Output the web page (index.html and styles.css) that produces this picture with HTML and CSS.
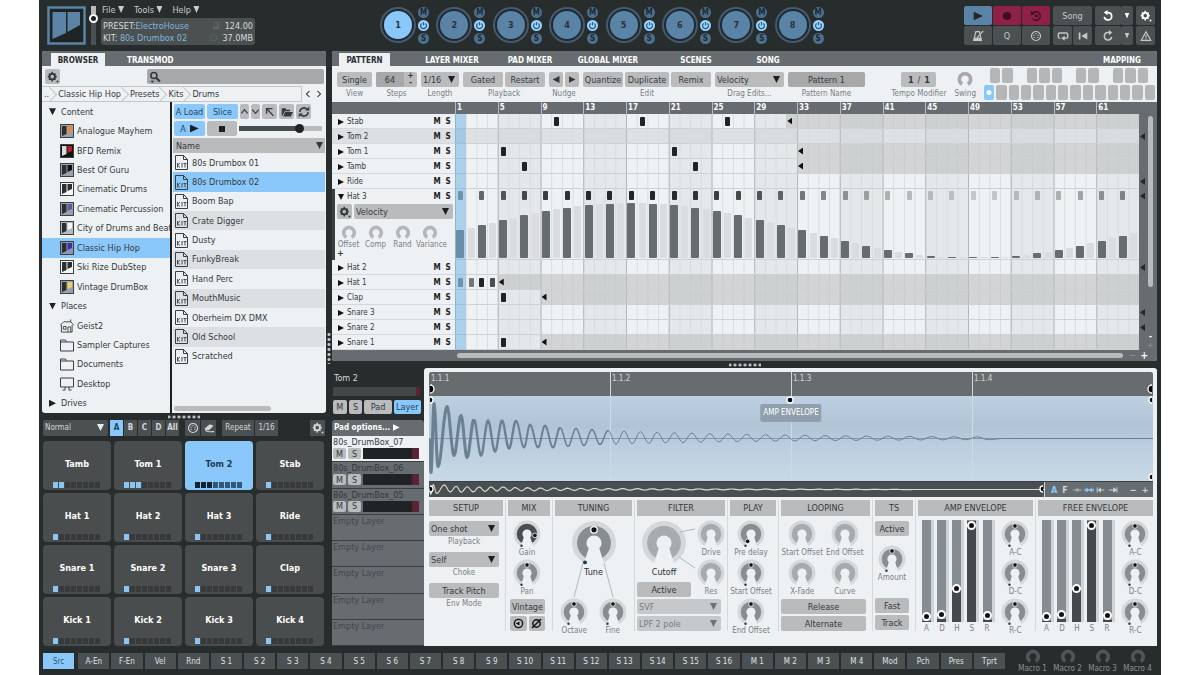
FILE: index.html
```html
<!DOCTYPE html>
<html lang="en">
<head>
  <meta charset="UTF-8">
  <meta name="viewport" content="width=device-width, initial-scale=1.0">
  <title>Geist2</title>
  <link rel="stylesheet" href="styles.css">
</head>
<body>
  <!-- shared icons -->
  <svg class="defs" aria-hidden="true">
    <symbol id="gear" viewBox="0 0 16 16">
      <circle cx="7" cy="7.5" r="3.6" fill="none" stroke="currentColor" stroke-width="2.4"/>
      <path d="M7 1v3M7 11v3M1 7.5h2.5M10.5 7.5H13M2.5 3.5l2 1.6M11.5 3.5l-2 1.6M2.5 11.5l2-1.6M11.5 11.5l-2-1.6" stroke="currentColor" stroke-width="2.2"/>
      <circle cx="14" cy="14" r="1.3" fill="currentColor"/>
    </symbol>
    <symbol id="search" viewBox="0 0 16 16">
      <circle cx="6.5" cy="6" r="4" fill="none" stroke="currentColor" stroke-width="2.2"/>
      <path d="M9.5 9l5 5" stroke="currentColor" stroke-width="2.8"/><path d="M2 13h5l-2.500 3z" fill="currentColor"/>
    </symbol>
    <symbol id="power" viewBox="0 0 12 12">
      <path d="M4 3.8a3.2 3.2 0 1 0 4 0M6 2.2v3.4" fill="none" stroke="currentColor" stroke-width="1.3"/>
    </symbol>
    <symbol id="refresh" viewBox="0 0 16 16">
      <path d="M2.5 8a5.5 5.5 0 0 1 9.5-3.7M13.5 8A5.5 5.5 0 0 1 4 11.7" fill="none" stroke="currentColor" stroke-width="2"/>
      <path d="M9.5 6H15V1zM6.5 10H1v5z" fill="currentColor"/>
    </symbol>
    <symbol id="folder" viewBox="0 0 16 16">
      <path d="M1 13V3h5l1 2h5v2H5L2 13zM3 14l2.5-6H16l-3 6z" fill="currentColor"/>
    </symbol>
    <symbol id="kit" viewBox="0 0 13 15">
      <path d="M.5.5h8l4 4v10H.5zM8.5.5v4h4" fill="none" stroke="#3a3f42"/>
      <path d="M2.5 8v4.500M5 8l-2.500 2.300L5 12.500M7 8v4.500M8.500 8.500h3M10 8.500v4" fill="none" stroke="#3a3f42" stroke-width=".9"/>
    </symbol>
    <symbol id="dir" viewBox="0 0 14 13">
      <path d="M.5 12.5v-11h5l1 2h7v9zM.5 3.5h6" fill="none" stroke="#3a3f42"/>
    </symbol>
    <symbol id="home" viewBox="0 0 15 14">
      <path d="M1.5 6v7.5H13V6M0 6.500l4-4h7.500l3.500 4M8.500 13.500V8h3v5.500M3.500 7.500h3v3h-3zM11.500 2.500V0" fill="none" stroke="#3a3f42"/>
    </symbol>
    <symbol id="screen" viewBox="0 0 14 13">
      <path d="M.5.5h13v9H.5zM5 9.5v2.5M9 9.5v2.5M2.5 12.5h3M8.5 12.5h3" fill="none" stroke="#3a3f42"/>
    </symbol>
    <symbol id="ball" viewBox="0 0 14 14">
      <circle cx="7" cy="7" r="5.3" fill="none" stroke="currentColor" stroke-width="1.3"/>
      <circle cx="4.5" cy="6" r=".8" fill="currentColor"/><circle cx="7" cy="4.3" r=".8" fill="currentColor"/><circle cx="9.5" cy="6" r=".8" fill="currentColor"/><circle cx="5" cy="8.7" r=".7" fill="currentColor"/><circle cx="9" cy="8.7" r=".7" fill="currentColor"/>
    </symbol>
    <symbol id="metro" viewBox="0 0 14 14">
      <path d="M4.5 2h4L11 12H2zM6 9l7-8" fill="none" stroke="currentColor" stroke-width="1.4"/>
      <path d="M2.5 9h8v3h-8z" fill="currentColor"/>
    </symbol>
    <symbol id="knob" viewBox="-14 -14 28 28">
      <circle r="13.4" class="k-rim"/><circle r="10.3" class="k-ring"/><circle r="4.6" class="k-gap"/>
      <path d="M-2.5 1L-7 15H7L2.5 1z" class="k-gap"/>
    </symbol>
    <symbol id="ring" viewBox="-9 -9 18 18">
      <path d="M-3 6A6 6 0 1 1 3 6" fill="none" stroke="currentColor" stroke-width="4"/>
    </symbol>
  </svg>

  <div class="app">
    <header class="top">
      <div class="brand">
        <svg class="logo" viewBox="0 0 39 39" aria-label="Geist2"><rect x="1.5" y="1.5" width="36" height="36" fill="#1f2425" stroke="#5a83a6" stroke-width="2.5"/><path d="M5.5 6H19v21L5.5 33z M20.500 6H33v13l-12.500 7z" fill="#5a83a6"/></svg>
        <input class="master" type="range" value="75" aria-label="Master volume">
        <div class="brand-info">
          <nav class="menu">
            <button>File <i class="down"></i></button>
            <button>Tools <i class="down"></i></button>
            <button>Help <i class="down"></i></button>
          </nav>
          <div class="lcd">
            <div><span>PRESET:<b>ElectroHouse</b></span><svg><use href="#metro"/></svg><span>124.00</span></div>
            <div><span>KIT: <b>80s Drumbox 02</b></span><svg><use href="#ball"/></svg><span>37.0MB</span></div>
          </div>
        </div>
      </div>
      <div class="engines" id="engines"></div>
      <div class="transport">
        <div class="t-grid">
          <button class="steel" aria-label="Play"><svg viewBox="0 0 14 14"><path d="M2 2l11 5-11 5z" fill="#20282c"/></svg></button>
          <button class="red" aria-label="Record"><svg viewBox="0 0 14 14"><circle cx="7" cy="7" r="4.8" fill="#3d1020"/></svg></button>
          <button class="red" aria-label="Overdub"><svg viewBox="0 0 14 14"><path d="M3 4a5 5 0 1 1 0 6" fill="none" stroke="#3d1020" stroke-width="1.6"/><path d="M1 6V1l5 4z" fill="#3d1020"/><circle cx="7.5" cy="7" r="1.8" fill="#3d1020"/></svg></button>
          <button aria-label="Metronome"><svg><use href="#metro"/></svg></button>
          <button>Q</button>
          <button aria-label="Midi"><svg><use href="#ball"/></svg></button>
        </div>
        <div class="t-grid song">
          <button class="wide">Song</button>
          <button aria-label="Loop"><svg viewBox="0 0 14 14"><path d="M4 9.500H3a1.500 1.500 0 0 1-1.500-1.500V5A1.500 1.500 0 0 1 3 3.500h8A1.500 1.500 0 0 1 12.500 5v3A1.500 1.500 0 0 1 11 9.500H8" fill="none" stroke="currentColor" stroke-width="1.6"/><path d="M9 6.500v6l-4-3z" fill="currentColor"/></svg></button>
          <button aria-label="Rewind"><svg viewBox="0 0 14 14"><path d="M2 3h2v8H2zM12 3v8L5 7z" fill="currentColor"/></svg></button>
        </div>
        <div class="t-grid undo">
          <button class="lit" aria-label="Undo"><svg viewBox="0 0 14 14"><path d="M5 3h2a4.3 4.3 0 1 1-4.3 5" fill="none" stroke="currentColor" stroke-width="2"/><path d="M6.5 0v6L2 3z" fill="currentColor"/></svg></button>
          <button class="lit" aria-label="Undo list"><i class="down"></i></button>
          <button aria-label="Redo"><svg viewBox="0 0 14 14"><path d="M9 3H7a4.3 4.3 0 1 0 4.3 5" fill="none" stroke="currentColor" stroke-width="1.8"/><path d="M8 0v6l4-3z" fill="currentColor"/></svg></button>
          <button aria-label="Redo list"><i class="down"></i></button>
        </div>
        <div class="t-grid side">
          <button class="lit" aria-label="Settings"><svg><use href="#gear"/></svg></button>
          <button aria-label="Panic"><svg viewBox="0 0 14 14"><path d="M7 2l5.5 10h-11zM7 5.5V9M7 9.8v1.2" fill="none" stroke="currentColor" stroke-width="1.4"/></svg></button>
        </div>
      </div>
    </header>

    <main class="main">
      <div class="column">
        <section class="panel browser">
          <div class="tabs browser-tabs">
            <button class="tab active">BROWSER</button>
            <button class="tab">TRANSMOD</button>
          </div>
          <div class="search-row">
            <button class="btn icon" aria-label="Browser options"><svg><use href="#gear"/></svg></button>
            <label class="search"><svg><use href="#search"/></svg><input type="text" aria-label="Search"></label>
          </div>
          <nav class="crumbs">
            <div class="crumb-list"><a href="#">..</a><a href="#">Classic Hip Hop</a><a href="#">Presets</a><a href="#">Kits</a><a href="#">Drums</a></div>
            <button aria-label="Back"><svg viewBox="0 0 8 10"><path d="M6 1L2 5l4 4" fill="none" stroke="#222" stroke-width="1.4"/></svg></button>
            <button aria-label="Forward"><svg viewBox="0 0 8 10"><path d="M2 1l4 4-4 4" fill="none" stroke="#222" stroke-width="1.4"/></svg></button>
          </nav>
          <div class="browser-body">
            <ul class="tree" id="tree"></ul>
            <div class="files">
              <div class="file-tools">
                <button class="btn blue">A Load</button>
                <button class="btn blue">Slice</button>
                <button class="btn thin" aria-label="Previous"><svg viewBox="0 0 10 10"><path d="M1.5 7L5 3l3.5 4" fill="none" stroke="currentColor" stroke-width="1.3"/></svg></button>
                <button class="btn thin" aria-label="Next"><svg viewBox="0 0 10 10"><path d="M1.5 3L5 7l3.5-4" fill="none" stroke="currentColor" stroke-width="1.3"/></svg></button>
                <button class="btn icon" aria-label="Reveal"><svg viewBox="0 0 14 14"><path d="M3 9V3h7M3.500 3.500l7.500 8" fill="none" stroke="currentColor" stroke-width="1.5"/></svg></button>
                <button class="btn icon" aria-label="Open folder"><svg><use href="#folder"/></svg></button>
                <button class="btn icon" aria-label="Refresh"><svg><use href="#refresh"/></svg></button>
              </div>
              <div class="file-tools">
                <button class="btn blue">A <i class="right big"></i></button>
                <button class="btn stop" aria-label="Stop"><i></i></button>
                <input class="preview" type="range" value="75" aria-label="Preview volume">
              </div>
              <div class="file-head">Name <i class="down"></i></div>
              <ul class="file-list" id="files"></ul>
              <div class="hbar"></div>
            </div>
          </div>
        </section>

        <div class="dots"></div>

        <div class="pad-tools">
          <span class="drop dark mode"><select aria-label="Pad mode"><option>Normal</option></select></span>
          <div class="banks">
            <button class="on">A</button><button>B</button><button>C</button><button>D</button><button>All</button>
          </div>
          <div class="banks tools">
            <button aria-label="Midi learn"><svg><use href="#ball"/></svg></button>
            <button aria-label="Erase"><svg viewBox="0 0 16 14"><path d="M2 8l7-6 5 2-6 6H4z" fill="currentColor"/><path d="M3 10c3 4 8 1 12 2" fill="none" stroke="currentColor" stroke-width="1.4"/></svg></button>
          </div>
          <div class="banks repeat"><button>Repeat</button><button>1/16</button></div>
          <button class="pad-gear" aria-label="Pad settings"><svg><use href="#gear"/></svg></button>
        </div>

        <div class="pads" id="pads"></div>
      </div>

      <div class="column">
        <section class="panel sequencer">
          <div class="tabs seq-tabs">
            <button class="tab active">PATTERN</button>
            <button class="tab layer-mixer">LAYER MIXER</button>
            <button class="tab">PAD MIXER</button>
            <button class="tab">GLOBAL MIXER</button>
            <button class="tab scenes">SCENES</button>
            <button class="tab song-tab">SONG</button>
            <button class="tab mapping">MAPPING</button>
          </div>
          <div class="toolbar">
            <div class="group"><div><button class="btn w35">Single</button></div><span>View</span></div>
            <div class="group"><div class="stepper"><input type="text" value="64" id="steps"><span class="pm"><button>+</button><button>-</button></span></div><label for="steps">Steps</label></div>
            <div class="group"><span class="drop w38"><select id="length"><option>1/16</option></select></span><label for="length">Length</label></div>
            <div class="group"><div><button class="btn w40">Gated</button><button class="btn w40">Restart</button></div><span>Playback</span></div>
            <div class="group"><div><button class="btn w14" aria-label="Nudge left"><i class="back"></i></button><button class="btn w14" aria-label="Nudge right"><i class="right"></i></button></div><span>Nudge</span></div>
            <div class="group"><div><button class="btn w40">Quantize</button><button class="btn w44">Duplicate</button><button class="btn w40">Remix</button></div><span>Edit</span></div>
            <div class="group"><span class="drop w69"><select id="drag"><option>Velocity</option></select></span><label for="drag">Drag Edits...</label></div>
            <div class="group"><input class="name" type="text" value="Pattern 1" id="pattern-name"><label for="pattern-name">Pattern Name</label></div>
            <div class="toolbar-end">
              <div class="group"><div class="btn tempo"><b>1</b> / <b>1</b></div><span>Tempo Modifier</span></div>
              <div class="group swing"><svg><use href="#ring"/></svg><span>Swing</span></div>
              <div class="keys" id="keys"></div>
            </div>
          </div>
          <div class="ruler"><div class="ruler-marks" id="ruler"></div></div>
          <div class="tracks">
            <div class="track-rows" id="rows-a"></div>
            <div class="lane">
              <div class="lane-side">
                <div class="lane-pick">
                  <button class="btn icon" aria-label="Lane options"><svg><use href="#gear"/></svg></button>
                  <span class="drop"><select aria-label="Lane"><option>Velocity</option></select></span>
                </div>
                <div class="lane-knobs">
                  <div><svg><use href="#ring"/></svg>Offset</div>
                  <div><svg><use href="#ring"/></svg>Comp</div>
                  <div><svg><use href="#ring"/></svg>Rand</div>
                  <div><svg><use href="#ring"/></svg>Variance</div>
                </div>
                <button class="plus">+</button>
              </div>
              <div class="steps bars" id="velocity"></div>
              <div class="gutter"></div>
            </div>
            <div class="track-rows" id="rows-b"></div>
            <div class="playhead"><i></i></div>
            <div class="vbar"></div>
            <div class="vzoom"><b>-</b><i>+</i></div>
          </div>
          <div class="seq-foot"><div class="hbar"></div><i>−</i><b>+</b></div>
        </section>

        <div class="dots"></div>

        <div class="lower">
          <aside class="layers">
            <h2>Tom 2</h2>
            <div class="meter"></div>
            <div class="layer-btns">
              <button class="btn">M</button><button class="btn">S</button><button class="btn pad-btn">Pad</button><button class="btn blue pad-btn">Layer</button>
            </div>
            <button class="pad-options">Pad options... <i class="right"></i></button>
            <div class="layer-list" id="layers"></div>
          </aside>

          <section class="editor">
            <div class="wave">
              <div class="wave-ruler"><span>1.1.1</span><span>1.1.2</span><span>1.1.3</span><span>1.1.4</span></div>
              <div class="wave-view">
                <svg viewBox="0 0 724 85" preserveAspectRatio="none" id="wave"></svg>
                <span class="tip">AMP ENVELOPE</span>
              </div>
              <div class="wave-foot">
                <svg viewBox="0 0 724 15" preserveAspectRatio="none" id="overview"></svg>
                <div class="wave-zoom">
                  <b class="a">A</b><b>F</b>
                  <svg viewBox="0 0 58 10"><path d="M0 5h3M7 5h3M5 3v4M48 5" stroke="#aeb4b6"/><path d="M3 3l2 2-2 2zM7 3L5 5l2 2z" fill="#aeb4b6"/><path d="M13 5h10" stroke="#8bc8fb"/><path d="M15 2l3 3-3 3zM21 2l-3 3 3 3zM13 3l2 2-2 2zM23 3l-2 2 2 2z" fill="#8bc8fb"/><path d="M27 2v6M28 5h7M40 5h7M49 2v6" stroke="#d4d8da"/><path d="M31 2v6l-3-3zM45 2v6l4-3z" fill="#d4d8da"/></svg>
                  <b>−</b><b>+</b>
                </div>
              </div>
              <svg class="handles" viewBox="0 0 724 125" preserveAspectRatio="none">
                <g fill="#000" stroke="#fff" stroke-width="1.3">
                  <path d="M1 13a4 4 0 0 1 0 8M1 25a3 3 0 0 1 0 6M1 114a3 3 0 0 1 0 6"/>
                  <circle cx="361" cy="28" r="3"/>
                  <path d="M723 13a4 4 0 0 0 0 8M723 25a3 3 0 0 0 0 6M723 102a3 3 0 0 0 0 6M614 114a3 3 0 0 0 0 6"/>
                </g>
              </svg>
            </div>

            <div class="sections">
              <div class="sec">
                <h3>SETUP</h3>
                <div class="setup">
                  <span class="drop"><select id="playback"><option>One shot</option></select></span><label for="playback">Playback</label>
                  <span class="drop"><select id="choke"><option>Self</option></select></span><label for="choke">Choke</label>
                  <button class="btn" id="env">Track Pitch</button><label for="env">Env Mode</label>
                </div>
              </div>
              <div class="sec">
                <h3>MIX</h3>
                <div class="cells">
                  <div class="k dark" data-dot="100">Gain</div>
                  <div class="k" data-dot="0">Pan</div>
                  <div class="pair"><button class="btn">Vintage</button>
                    <span class="half"><button class="btn" aria-label="Mono"><svg viewBox="0 0 12 12"><circle cx="6" cy="6" r="4.5" fill="none" stroke="#111" stroke-width="1.5"/><path d="M3 6l4-2v4z"/></svg></button><button class="btn" aria-label="Phase"><svg viewBox="0 0 12 12"><circle cx="6" cy="6" r="4" fill="none" stroke="#111" stroke-width="1.6"/><path d="M1 11L11 1" stroke="#111" stroke-width="1.5"/></svg></button></span>
                  </div>
                </div>
              </div>
              <div class="sec">
                <h3>TUNING</h3>
                <div class="cells two tuning">
                  <svg class="wires" viewBox="0 0 77 117" preserveAspectRatio="none"><path d="M28 43l-9 34M49 43l9 34" stroke="#b4b8ba" fill="none"/></svg>
                  <div class="k large" data-dot="0">Tune</div>
                  <div class="k" data-dot="0">Octave</div>
                  <div class="k" data-dot="0">Fine</div>
                </div>
              </div>
              <div class="sec">
                <h3>FILTER</h3>
                <div class="cells filter">
                  <svg class="wires" viewBox="0 0 88 117" preserveAspectRatio="none"><path d="M43 12l15-3M42 37l16 11" stroke="#b4b8ba" fill="none"/></svg>
                  <div class="k large dim">Cutoff</div>
                  <div class="k dim">Drive</div>
                  <div class="k dim">Res</div>
                  <button class="btn active-btn">Active</button>
                  <div class="pair wide">
                    <span class="drop off"><select aria-label="Filter type"><option>SVF</option></select></span>
                    <span class="drop off"><select aria-label="Filter mode"><option>LPF 2 pole</option></select></span>
                  </div>
                </div>
              </div>
              <div class="sec">
                <h3>PLAY</h3>
                <div class="cells">
                  <div class="k" data-dot="-155">Pre delay</div>
                  <div class="k" data-dot="0">Start Offset</div>
                  <div class="k" data-dot="0">End Offset</div>
                </div>
              </div>
              <div class="sec">
                <h3>LOOPING</h3>
                <div class="cells two">
                  <div class="k dim">Start Offset</div>
                  <div class="k dim">End Offset</div>
                  <div class="k dim">X-Fade</div>
                  <div class="k dim">Curve</div>
                  <div class="pair wide"><button class="btn">Release</button><button class="btn">Alternate</button></div>
                </div>
              </div>
              <div class="sec">
                <h3>TS</h3>
                <div class="ts">
                  <button class="btn">Active</button>
                  <div class="k" data-dot="0">Amount</div>
                  <div class="pair"><button class="btn">Fast</button><button class="btn">Track</button></div>
                </div>
              </div>
              <div class="sec"><h3>AMP ENVELOPE</h3><div class="env"></div></div>
              <div class="sec"><h3>FREE ENVELOPE</h3><div class="env"></div></div>
            </div>
          </section>
        </div>
      </div>
    </main>

    <footer class="mods">
      <div class="mod-list" id="mods"></div>
      <div class="macros">
        <div><svg><use href="#ring"/></svg>Macro 1</div>
        <div><svg><use href="#ring"/></svg>Macro 2</div>
        <div><svg><use href="#ring"/></svg>Macro 3</div>
        <div><svg><use href="#ring"/></svg>Macro 4</div>
      </div>
    </footer>
  </div>
  <script src="script.js"></script>
</body>
</html>
```
FILE: styles.css
```css
:root {
  --bg: #272c2d;
  --panel: #edf1f3;
  --bar: #666c6f;
  --btn: #b9bbbd;
  --dark-btn: #4b5152;
  --blue: #8ac8fc;
  --steel: #5a83a6;
  --text: #34393c;
  --muted: #7b8083;
}
* {
  box-sizing: border-box;
}
body {
  margin: 0;
  padding: 0 39px;
  background: #fff;
  color: var(--text);
  font: 9px/12px "DejaVu Sans Condensed", "DejaVu Sans", sans-serif;
}
button, input, select {
  font: inherit;
  color: inherit;
  margin: 0;
  padding: 0;
  border: 0;
  background: none;
  min-width: 0;
  white-space: nowrap;
}
ul {
  list-style: none;
  margin: 0;
  padding: 0;
}
h2, h3 {
  margin: 0;
  font: inherit;
}
svg {
  display: block;
}
.defs {
  display: none;
}
.app {
  min-height: 100vh;
  display: flex;
  flex-direction: column;
  background: var(--bg);
  padding: 0 4px 0 3px;
}

/* triangles */
.down, .right, .back {
  display: inline-block;
  width: 7px;
  height: 7px;
  background: currentColor;
}
.down { clip-path: polygon(0 0, 100% 0, 50% 100%); }
.right { clip-path: polygon(0 0, 100% 50%, 0 100%); }
.back { clip-path: polygon(100% 0, 100% 100%, 0 50%); }
.big {
  width: 9px;
  height: 8px;
}

/* buttons and drop-downs */
.btn {
  height: 15px;
  border-radius: 2px;
  background: var(--btn);
  text-align: center;
  display: flex;
  align-items: center;
  justify-content: center;
}
.btn.blue {
  background: var(--blue);
  color: #24445e;
}
.btn.icon {
  width: 15px;
}
.btn.icon svg {
  width: 12px;
  height: 12px;
}
.w14 { width: 14px; }
.w35 { width: 35px; }
.w38 { width: 38px; }
.w40 { width: 40px; }
.w44 { width: 44px; }
.w69 { width: 69px; }
.drop {
  position: relative;
  display: block;
  height: 15px;
  border-radius: 2px;
  background: var(--btn);
}
.drop select {
  appearance: none;
  width: 100%;
  height: 15px;
  padding-left: 2px;
}
.drop::after {
  content: "";
  position: absolute;
  right: 4px;
  top: 4px;
  width: 7px;
  height: 7px;
  background: #1c2022;
  clip-path: polygon(0 0, 100% 0, 50% 100%);
  pointer-events: none;
}
.drop.off {
  background: #c6c9cb;
  color: #777b7e;
}
.drop.off::after {
  background: #6d7174;
}

/* header */
.top {
  height: 51px;
  display: flex;
  padding: 6px 2px 0 5px;
}
.brand {
  width: 333px;
  display: flex;
}
.logo {
  width: 39px;
  height: 39px;
}
.master {
  appearance: none;
  writing-mode: vertical-lr;
  direction: rtl;
  width: 5px;
  height: 39px;
  margin: 0 5px;
  background: linear-gradient(#b9bbbd 8px, #4b5152 8px);
}
.master::-webkit-slider-thumb {
  appearance: none;
  width: 9px;
  height: 9px;
  margin: 0 -2px;
  border: 2px solid #fff;
  border-radius: 50%;
  background: #1c2022;
}
.menu {
  display: flex;
  gap: 10px;
  height: 12px;
  margin-top: -2px;
  padding-left: 1px;
  color: #c9cdcf;
}
.menu .down {
  width: 6px;
}
.lcd {
  width: 154px;
  height: 27px;
  margin-top: 2px;
  padding: 2px;
  border-radius: 3px;
  background: #4b5051;
  color: #d8dcdd;
}
.lcd div {
  display: flex;
  justify-content: space-between;
}
.lcd b {
  font-weight: normal;
  color: #84b5dc;
}
.lcd svg {
  width: 9px;
  height: 9px;
  margin: 1px 4px 0 auto;
  color: #5f6566;
}
.engines {
  width: 451px;
  display: flex;
}
.engine {
  flex: 1;
  display: flex;
  gap: 2px;
}
.engine > button {
  width: 32px;
  height: 32px;
  margin: 3px 2px;
  border: 2px solid #1d2a34;
  border-radius: 50%;
  background: var(--steel);
  box-shadow: 0 0 0 2px #47596a;
  color: #25333e;
  font-weight: bold;
}
.engine > button.on {
  background: var(--blue);
}
.engine > div {
  display: flex;
  flex-direction: column;
  gap: 2px;
  padding-top: 1px;
}
.engine div button {
  width: 11px;
  height: 11px;
  border-radius: 50%;
  background: #4d708d;
  color: #1d2a34;
  font-size: 8px;
  line-height: 11px;
  font-weight: bold;
}
.engine div .pw {
  background: #9bd3ff;
  color: #285d8a;
}
.transport {
  margin-left: auto;
  display: flex;
  gap: 3px;
}
.t-grid {
  display: grid;
  grid-template-columns: repeat(3, 28px);
  grid-auto-rows: 19px;
  gap: 1px;
}
.t-grid.song {
  grid-template-columns: 19px 19px;
}
.t-grid.undo {
  grid-template-columns: 26px 12px;
  gap: 1px 0;
}
.t-grid.side {
  grid-template-columns: 19px;
}
.t-grid button {
  display: flex;
  align-items: center;
  justify-content: center;
  background: var(--dark-btn);
  border-radius: 2px;
  color: #c4c8ca;
}
.t-grid .wide {
  grid-column: span 2;
}
.t-grid .steel { background: var(--steel); }
.t-grid .red { background: #8f2149; }
.t-grid .lit { color: #fff; }
.t-grid svg {
  width: 12px;
  height: 12px;
}
.t-grid .down {
  width: 5px;
  height: 6px;
}

/* main columns */
.main {
  flex: 1;
  display: grid;
  grid-template-columns: 284px minmax(0, 1fr);
  gap: 6px;
  position: relative;
}
.column {
  display: flex;
  flex-direction: column;
}
.main::after {
  content: "";
  position: absolute;
  left: 285px;
  bottom: 282px;
  width: 4px;
  height: 32px;
  background: radial-gradient(circle, #c4c8ca 1px, transparent 2px) 0 0 / 4px 5px;
}
.dots {
  height: 7px;
  flex: none;
  background: radial-gradient(circle, #c4c8ca 1px, transparent 2px) center / 5px 4px repeat-x;
  width: 32px;
  margin: 0 auto;
}
.panel {
  border-radius: 3px;
  background: var(--panel);
  overflow: hidden;
}
.tabs {
  height: 15px;
  padding: 2px 0 0 9px;
  display: flex;
  background: var(--bar);
}
.tab {
  font-size: 8px;
  font-weight: bold;
  color: #fff;
  height: 13px;
  padding-top: 2px;
}
.tab.active {
  background: var(--panel);
  color: #2b2f31;
  width: 54px;
}

/* browser */
.browser {
  flex: 1;
  display: flex;
  flex-direction: column;
}
.browser-tabs .tab + .tab {
  margin-left: 22px;
}
.search-row {
  display: flex;
  justify-content: space-between;
  padding: 3px 2px 2px 3px;
}
.search {
  width: 177px;
  height: 15px;
  border-radius: 2px;
  background: #a6a8aa;
  display: flex;
  align-items: center;
  padding-left: 2px;
}
.search svg {
  width: 12px;
  height: 12px;
}
.search input {
  flex: 1;
}
.crumbs {
  display: flex;
  height: 16px;
  align-items: center;
  padding-right: 2px;
}
.crumb-list {
  flex: 1;
  display: flex;
  align-items: center;
  height: 16px;
  border: 1px solid #c3c7c9;
  border-left: 0;
}
.crumb-list a {
  color: inherit;
  text-decoration: none;
  padding-left: 2px;
  display: flex;
  align-items: center;
}
.crumb-list a:not(:last-child)::after {
  content: "";
  width: 10px;
  height: 10px;
  margin: 0 1px 0 -5px;
  border: solid #c3c7c9;
  border-width: 1px 1px 0 0;
  transform: rotate(45deg);
}
.crumbs button {
  width: 11px;
}
.crumbs svg {
  width: 6px;
  height: 8px;
  margin: auto;
}
.browser-body {
  flex: 1;
  display: grid;
  grid-template-columns: 130px minmax(0, 1fr);
}
.tree {
  display: grid;
  grid-auto-rows: 1fr;
  border-right: 2px solid #1c2022;
  overflow: hidden;
}
.tree li {
  display: flex;
  align-items: center;
  gap: 3px;
  padding-left: 18px;
  white-space: nowrap;
}
.tree .head {
  padding-left: 7px;
  gap: 5px;
}
.tree .head i {
  color: #1c2022;
}
.tree svg {
  width: 14px;
  height: 14px;
  flex: none;
}
.tree .on, .file-list .on {
  background: var(--blue);
}
.files {
  padding: 2px 1px 2px 2px;
  display: flex;
  flex-direction: column;
}
.file-tools {
  display: flex;
  gap: 2px;
  margin-bottom: 2px;
}
.file-tools .blue {
  width: 31px;
  gap: 4px;
}
.file-tools .blue .right {
  color: #1c2022;
}
.file-tools .thin {
  width: 9px;
}
.file-tools .thin svg {
  width: 9px;
  height: 9px;
}
.stop {
  width: 30px;
}
.stop i {
  width: 6px;
  height: 6px;
  background: #1c2022;
}
.preview {
  appearance: none;
  flex: 1;
  height: 5px;
  margin: 5px 3px 0 0;
  background: linear-gradient(90deg, #484d50 75%, var(--btn) 75%);
}
.preview::-webkit-slider-thumb {
  appearance: none;
  width: 9px;
  height: 9px;
  border-radius: 50%;
  background: #202426;
}
.file-head {
  height: 15px;
  margin-left: -1px;
  padding: 0 2px 0 3px;
  display: flex;
  align-items: center;
  justify-content: space-between;
  background: var(--btn);
}
.file-list {
  height: 213px;
  margin-left: -1px;
  display: grid;
  grid-auto-rows: 1fr;
}
.file-list li {
  display: flex;
  align-items: center;
  gap: 4px;
  padding-left: 2px;
}
.file-list li:nth-child(even) {
  background: #dde0e3;
}
.file-list .on:nth-child(even) {
  background: var(--blue);
}
.file-list svg {
  width: 13px;
  height: 15px;
}
.hbar {
  height: 5px;
  border-radius: 3px;
  background: var(--btn);
}
.files .hbar {
  width: 97px;
  margin-top: auto;
}

/* pad tools */
.pad-tools {
  display: flex;
  height: 16px;
  margin-bottom: 5px;
  padding: 0 1px;
  color: #d3d7d8;
}
.pad-tools button, .drop.dark {
  background: var(--dark-btn);
  height: 16px;
}
.mode {
  width: 65px;
  font-size: 8px;
}
.mode select {
  background: none;
}
.drop.dark::after {
  background: #e8ebec;
}
.banks {
  display: flex;
  gap: 1px;
  margin-left: 2px;
}
.banks button {
  width: 13px;
  font-size: 8px;
  font-weight: bold;
}
.pad-tools .banks .on {
  background: var(--blue);
  color: #24445e;
}
.banks.tools {
  margin-left: 6px;
}
.banks.tools button {
  width: 15px;
}
.pad-tools svg {
  width: 12px;
  height: 12px;
  margin: auto;
}
.banks.repeat {
  margin-left: 6px;
}
.banks.repeat button {
  width: 23px;
  font-weight: normal;
}
.banks.repeat button:first-child {
  width: 32px;
}
.pad-gear {
  width: 15px;
  margin-left: auto;
}
.pads {
  display: grid;
  grid-template-columns: repeat(4, 1fr);
  grid-auto-rows: 49px;
  gap: 3px;
  padding: 0 2px 0 1px;
}
.pad {
  border-radius: 4px;
  background: #494d4e;
  color: #fff;
  font-weight: bold;
  display: flex;
  flex-direction: column;
  align-items: center;
  justify-content: flex-end;
  gap: 12px;
  padding-bottom: 2px;
}
.pad span {
  display: flex;
}
.pad i {
  width: 6px;
  height: 6px;
  background: #37393a;
  border-right: 1px solid #494d4e;
}
.pad i.lit {
  background: #8cc4f2;
}
.pad.on {
  background: var(--blue);
  color: #1f3a50;
}
.pad.on i {
  background: #31587a;
  border-color: #8ac8fc;
}
.pad.on i.lit {
  background: #142330;
}

/* sequencer */
.seq-tabs {
  padding-left: 7px;
}
.seq-tabs .tab {
  width: 78px;
}
.seq-tabs .tab.active {
  width: 51px;
}
.seq-tabs .layer-mixer {
  margin-left: 23px;
}
.seq-tabs .scenes {
  width: 98px;
}
.seq-tabs .song-tab {
  width: 46px;
}
.seq-tabs .mapping {
  margin-left: auto;
  width: 70px;
}
.toolbar {
  display: flex;
  gap: 4px;
  height: 36px;
  padding: 6px 2px 0 5px;
}
.group > div {
  display: flex;
  gap: 2px;
}
.group > span:last-child, .group > label {
  display: block;
  margin-top: 1px;
  font-size: 8px;
  text-align: center;
  color: var(--muted);
  white-space: nowrap;
}
.group .stepper {
  gap: 0;
  width: 41px;
  height: 15px;
  border-radius: 2px;
  background: var(--btn);
}
.stepper input {
  width: 28px;
  text-align: center;
  background: #a6a8aa;
  border-radius: 2px;
}
.pm {
  display: flex;
  flex-direction: column;
  width: 13px;
}
.pm button {
  height: 7px;
  line-height: 7px;
  font-weight: bold;
  font-size: 8px;
}
.name {
  display: block;
  width: 77px;
  height: 15px;
  border-radius: 2px;
  background: #a6a8aa;
  text-align: center;
}
.toolbar-end {
  margin-left: auto;
  display: flex;
  gap: 8px;
}
.group .tempo {
  width: 35px;
  margin: 0 auto;
  gap: 4px;
}
.swing svg {
  width: 18px;
  height: 17px;
  margin: -2px auto 0;
  color: #a6a8aa;
}
.keys {
  width: 171px;
  margin-top: -4px;
}
.keys div {
  display: grid;
  grid-template-columns: repeat(14, 1fr);
  gap: 2px;
}
.keys .black {
  padding: 0 7px 0 6px;
  grid-template-columns: repeat(13, 1fr);
  margin-bottom: 2px;
}
.keys button {
  height: 15px;
  border-radius: 2px;
  background: #b4b6b8;
}
.keys .on {
  background: radial-gradient(circle, #fff 2px, var(--blue) 3px);
}
.ruler {
  height: 12px;
  background: var(--bar);
  padding: 0 18px 0 123px;
}
.ruler-marks {
  display: grid;
  grid-template-columns: repeat(16, 1fr);
}
.ruler-marks span {
  height: 12px;
  padding-left: 1px;
  border-left: 1px solid #b9bbbd;
  color: #fff;
  font-size: 8px;
  font-weight: bold;
}
.tracks {
  position: relative;
  background: linear-gradient(270deg, var(--bar) 18px, var(--panel) 18px);
  padding-bottom: 2px;
}
.track-rows {
  height: 88px;
  display: grid;
  grid-auto-rows: 1fr;
}
.track, .lane {
  display: grid;
  grid-template-columns: 123px minmax(0, 1fr) 18px;
}
.track-name {
  display: flex;
  align-items: center;
  gap: 3px;
  padding: 2px 3px 0 6px;
  font-size: 8px;
  border-bottom: 1px solid #d5d9db;
}
.track-name .right, .track-name .down {
  width: 6px;
  height: 6px;
  color: #111;
}
.track-name span {
  flex: 1;
}
.track-name button {
  width: 8px;
  font-weight: bold;
  color: #1c2022;
}
.steps {
  --even: #eff2f4;
  --odd: #e4e8eb;
  display: grid;
  grid-template-columns: repeat(64, 1fr);
  align-items: center;
  justify-items: center;
  border-bottom: 1px solid #cdd2d5;
  background:
    linear-gradient(90deg, #b3b8bb 1px, transparent 1px) 0 0 / 6.25% 100%,
    linear-gradient(90deg, #d9dde0 1px, transparent 1px) 0 0 / 1.5625% 100%,
    linear-gradient(90deg, var(--even) 50%, var(--odd) 50%) 0 0 / 12.5% 100%;
}
.selected .track-name {
  background: #dce0e3;
}
.selected .steps {
  --even: #dde1e4;
  --odd: #d8dcdf;
}
.steps > * {
  grid-row: 1;
}
.steps .note {
  width: 5px;
  height: 9px;
  border-radius: 1px;
  background: #202426;
}
.steps .rest {
  width: 100%;
  height: 100%;
  background: rgba(190, 192, 192, .6);
}
.steps .back {
  width: 5px;
  height: 7px;
  justify-self: start;
  margin-left: 1px;
  color: #111;
}
.gutter {
  background: var(--bar);
  display: flex;
  align-items: center;
  padding-left: 1px;
}
.gutter .back {
  width: 5px;
  height: 7px;
  color: #25292b;
}
.lane {
  height: 58px;
}
.lane-side {
  border-left: 3px solid #3a3f42;
  padding: 2px 2px 0 2px;
}
.track.open .track-name {
  border-left: 3px solid #3a3f42;
  padding-left: 3px;
  border-bottom: 0;
}
.lane-pick {
  display: flex;
  gap: 2px;
}
.lane-pick .drop {
  flex: 1;
}
.lane-knobs {
  display: flex;
  font-size: 8px;
  color: var(--muted);
  margin: 5px 0 0 -2px;
}
.lane-knobs div {
  width: 27px;
  text-align: center;
  line-height: 9px;
}
.lane-knobs svg {
  width: 18px;
  height: 16px;
  margin: 0 auto;
  color: #b4b6b8;
}
.plus {
  display: block;
  height: 8px;
  line-height: 8px;
  font-weight: bold;
}
.bars {
  align-items: end;
  padding-bottom: 1px;
}
.bars i {
  width: 7px;
  border-radius: 1px;
  background: #dadcdf;
}
.bars i:nth-child(odd) {
  width: 8px;
  background: var(--bar);
}
.playhead {
  position: absolute;
  inset: 0 18px 0 123px;
  pointer-events: none;
}
.playhead i {
  display: block;
  width: 1.5625%;
  height: 100%;
  background: rgba(110, 175, 225, .5);
}
.vbar {
  position: absolute;
  right: 4px;
  top: 2px;
  width: 5px;
  height: 171px;
  border-radius: 3px;
  background: var(--btn);
}
.vzoom {
  position: absolute;
  right: 2px;
  bottom: 0;
  width: 9px;
  line-height: 9px;
  text-align: center;
  color: #fff;
}
.vzoom i, .vzoom b {
  display: block;
}
.vzoom i, .seq-foot i {
  color: #8c9193;
  font-style: normal;
}
.seq-foot {
  height: 11px;
  display: flex;
  align-items: center;
  gap: 4px;
  padding: 0 9px 0 125px;
  background: var(--bar);
  color: #fff;
  font-size: 10px;
}
.seq-foot .hbar {
  flex: 1;
  margin-right: 2px;
}

/* layers */
.lower {
  flex: 1;
  display: grid;
  grid-template-columns: 92px minmax(0, 1fr);
}
.layers {
  display: flex;
  flex-direction: column;
}
.layers h2 {
  padding: 4px 0 3px 2px;
  color: #d3d7d8;
}
.meter {
  height: 9px;
  margin: 0 4px 4px 1px;
  background: linear-gradient(270deg, #5c2334 4px, #424748 4px);
}
.layer-btns {
  display: flex;
  gap: 2px;
  padding: 0 3px 6px 1px;
}
.layer-btns .btn {
  flex: 14;
  height: 14px;
}
.layer-btns .pad-btn {
  flex: 28;
}
.pad-options {
  height: 16px;
  padding-left: 2px;
  text-align: left;
  background: var(--bar);
  border-radius: 3px 3px 0 0;
  color: #fff;
  font-weight: bold;
  font-size: 8px;
}
.pad-options .right {
  vertical-align: -1px;
}
.layer-list {
  flex: 1;
  display: grid;
  grid-auto-rows: 1fr;
}
.layer {
  background: var(--bar);
  border-bottom: 1px solid #3a3f42;
  padding-left: 1px;
  overflow: hidden;
}
.layer.on {
  background: var(--panel);
}
.layer.empty {
  color: #43494c;
}
.layer div {
  display: flex;
  gap: 2px;
}
.layer .btn {
  width: 13px;
  height: 11px;
}
.layer div i {
  width: 56px;
  height: 11px;
  background: linear-gradient(270deg, #5c2334 6px, #1f2326 8px);
}

/* wave editor */
.editor {
  background: var(--panel);
  border-radius: 3px 3px 0 0;
  padding: 4px 4px 0 5px;
}
.wave {
  position: relative;
  margin-bottom: 3px;
}
.wave-ruler {
  height: 24px;
  display: grid;
  grid-template-columns: repeat(4, 1fr);
  background: #676d6f;
  border-radius: 2px 2px 0 0;
}
.wave-ruler span {
  border-left: 1px solid #d3d7d8;
  padding: 1px 0 0 1px;
  font-size: 8px;
  color: #d3d7d8;
}
.wave-ruler span:first-child {
  border-color: transparent;
}
.wave-view {
  height: 85px;
  position: relative;
  background: linear-gradient(#bdd1e3, #b0c4d6 35%, #bccfe0 60%, #c8d8e6);
}
.wave-view svg {
  width: 100%;
  height: 85px;
}
.tip {
  position: absolute;
  left: 50%;
  top: 8px;
  transform: translateX(-50%);
  height: 18px;
  padding: 3px;
  border-radius: 2px;
  background: #8f9fab;
  color: #fff;
  font-size: 8px;
  white-space: nowrap;
}
.wave-foot {
  height: 16px;
  display: flex;
  border-top: 1px solid #3a3f42;
  background: #494e50;
}
.wave-foot > svg {
  flex: 1;
  min-width: 0;
  height: 15px;
}
.wave-zoom {
  width: 109px;
  display: flex;
  align-items: center;
  gap: 5px;
  padding-left: 6px;
  background: var(--bar);
  border-left: 1px solid #d3d7d8;
  color: #d3d7d8;
}
.wave-zoom .a {
  color: var(--blue);
}
.wave-zoom svg {
  width: 52px;
  height: 10px;
}
.handles {
  position: absolute;
  inset: 0;
  width: 100%;
  height: 125px;
}

/* synth sections */
.sections {
  display: grid;
  grid-template-columns: 74fr 42fr 77fr 88fr 46fr 89fr 38fr 115fr 115fr;
  gap: 5px;
}
.sec {
  position: relative;
  height: 131px;
}
.sec:not(:last-child)::after {
  content: "";
  position: absolute;
  right: -3px;
  top: 0;
  bottom: 0;
  width: 1px;
  background: #d5d9db;
}
.sec h3 {
  height: 16px;
  padding-top: 2px;
  background: var(--btn);
  text-align: center;
  white-space: nowrap;
}
.setup {
  display: flex;
  flex-direction: column;
  padding: 5px 4px 0 0;
}
.setup label {
  height: 16px;
  font-size: 8px;
  text-align: center;
  color: var(--muted);
}
.cells {
  position: relative;
  display: grid;
  grid-template-rows: 39px 39px 39px;
  padding: 4px 4px 0 0;
}
.cells.two {
  grid-template-columns: 1fr 1fr;
}
.cells.tuning {
  padding-right: 0;
}
.cells.filter {
  grid-template-columns: 46fr 28fr;
  column-gap: 10px;
}
.k {
  font-size: 8px;
  line-height: 9px;
  color: var(--muted);
  display: flex;
  flex-direction: column;
  align-items: center;
  white-space: nowrap;
  min-width: 0;
}
.k svg {
  width: 28px;
  height: 28px;
  overflow: visible;
}
.k.large {
  font-size: 9px;
  line-height: 12px;
  color: #2b2f31;
}
.k.large svg {
  width: 46px;
  height: 46px;
}
.two .large {
  grid-column: span 2;
  grid-row: span 2;
}
.filter .large {
  grid-row: 1 / 3;
  grid-column: 1;
}
.filter .k:not(.large) {
  grid-column: 2;
}
.k-rim { fill: #d5d8da; }
.k-ring { fill: var(--ring, #878e92); }
.k-gap { fill: var(--panel); }
.k.dim { --ring: #a5abaf; }
.k.dark { --ring: #4a4f51; }
.pair {
  display: flex;
  flex-direction: column;
  gap: 2px;
  padding: 1px 1px 0 2px;
}
.pair.wide {
  grid-column: 1 / 3;
  padding: 1px 0 0;
}
.half {
  display: grid;
  grid-template-columns: 1fr 1fr;
  gap: 2px;
}
.half svg {
  width: 11px;
  height: 11px;
}
.wires {
  position: absolute;
  inset: 4px 0 0;
  width: 100%;
  height: 117px;
}
.active-btn {
  grid-area: 2 / 1;
  align-self: end;
  width: 54px;
  margin-bottom: 1px;
}
.ts {
  display: flex;
  flex-direction: column;
  padding: 5px 4px 0 0;
}
.ts .k {
  margin: 9px 0 16px;
}
.ts .pair {
  padding: 0;
}
.env {
  display: grid;
  grid-template-columns: repeat(5, 15fr) 35fr;
  grid-template-rows: 39px 39px 39px;
  padding: 4px 0 0 4px;
}
.fader {
  grid-row: 1 / 4;
  font-size: 8px;
  line-height: 13px;
  color: var(--muted);
  display: flex;
  flex-direction: column;
}
.fader input {
  appearance: none;
  writing-mode: vertical-lr;
  direction: rtl;
  width: 9px;
  height: 102px;
  background: linear-gradient(0deg, #46494b var(--v), #858d92 var(--v));
  box-shadow: 3px 0 #d0d3d5;
}
.fader input::-webkit-slider-thumb {
  appearance: none;
  width: 9px;
  height: 9px;
  border: 2px solid #fff;
  border-radius: 50%;
  background: #111;
}
.fader label {
  padding-left: 2px;
}

/* bottom bar */
.mods {
  display: flex;
  height: 29px;
  padding: 7px 2px 0 1px;
}
.mod-list {
  flex: 1;
  display: flex;
  gap: 2px;
  height: 16px;
}
.mod-list button {
  flex: 1;
  padding-top: 1px;
  background: var(--dark-btn);
  color: #dfe2e3;
  font-size: 8px;
}
.mod-list .on {
  background: var(--blue);
  color: #2f5573;
  margin-right: 2px;
}
.macros {
  display: flex;
  width: 140px;
  margin: -5px 0 0 10px;
  font-size: 8px;
  color: #8b9092;
}
.macros div {
  flex: 1;
  text-align: center;
  line-height: 9px;
  white-space: nowrap;
}
.macros svg {
  width: 18px;
  height: 16px;
  margin: 0 auto;
  color: #505658;
}
```
FILE: script.js
```js
const $ = (id) => document.getElementById(id);

// engine pads 1-8
$('engines').innerHTML = Array.from({ length: 8 }, (_, i) => `
  <div class="engine"><button class="${i ? '' : 'on'}">${i + 1}</button>
  <div><button>M</button><button class="pw" aria-label="Power"><svg viewBox="0 0 12 12"><use href="#power"/></svg></button><button>S</button></div></div>`).join('');

// content tree: name, background, left shape, right shape
const packs = [
  ['Analogue Mayhem', '#9aa2a8', '#2b2f31', '#e8894a'],
  ['BFD Remix', '#111', '#d8dcdd', '#b3202c'],
  ['Best Of Guru', '#9aa0b0', '#2b2f31', '#111'],
  ['Cinematic Drums', '#f4f6f7', '#2b2f31', '#2b2f31'],
  ['Cinematic Percussion', '#9aa0b0', '#2b2f31', '#56619a'],
  ['City of Drums and Beats', '#b4b8c4', '#2b2f31', '#f4f6f7'],
  ['Classic Hip Hop', '#8f96b8', '#2b2f31', '#3a34a0'],
  ['Ski Rize DubStep', '#f4f6f7', '#2b2f31', '#2b2f31'],
  ['Vintage DrumBox', '#9aa0b0', '#2b2f31', '#e8d060']
];
const places = [['Geist2', 'home'], ['Sampler Captures', 'dir'], ['Documents', 'dir'], ['Desktop', 'screen']];
$('tree').innerHTML =
  '<li class="head"><i class="down"></i>Content</li>' +
  packs.map(([name, bg, l, r]) => `<li class="${name === 'Classic Hip Hop' ? 'on' : ''}"><svg viewBox="0 0 14 14"><rect x=".5" y=".5" width="13" height="13" fill="${bg}" stroke="#3a3f42"/><path d="M2 2h4.5v8L2 12z" fill="${l}"/><path d="M7.5 2H12v5L7.5 9z" fill="${r}"/></svg>${name}</li>`).join('') +
  '<li class="head"><i class="down"></i>Places</li>' +
  places.map(([name, icon]) => `<li><svg><use href="#${icon}"/></svg>${name}</li>`).join('') +
  '<li class="head"><i class="right"></i>Drives</li>';

const kits = ['80s Drumbox 01', '80s Drumbox 02', 'Boom Bap', 'Crate Digger', 'Dusty', 'FunkyBreak', 'Hand Perc', 'MouthMusic', 'Oberheim DX DMX', 'Old School', 'Scratched'];
$('files').innerHTML = kits.map((k, i) => `<li class="${i === 1 ? 'on' : ''}"><svg><use href="#kit"/></svg>${k}</li>`).join('');

// drum pads with number of filled layers
const pads = [['Tamb', 2], ['Tom 1', 3], ['Tom 2', 3], ['Stab', 1], ['Hat 1', 1], ['Hat 2', 1], ['Hat 3', 1], ['Ride', 1],
  ['Snare 1', 1], ['Snare 2', 1], ['Snare 3', 1], ['Clap', 1], ['Kick 1', 1], ['Kick 2', 1], ['Kick 3', 1], ['Kick 4', 1]];
$('pads').innerHTML = pads.map(([name, n]) => {
  const cells = Array.from({ length: 8 }, (_, i) => `<i class="${i < n ? 'lit' : ''}"></i>`).join('');
  return `<button class="pad ${name === 'Tom 2' ? 'on' : ''}">${name}<span>${cells}</span></button>`;
}).join('');

// pattern keyboard
const blackKeys = [0, 1, 3, 4, 5, 7, 8, 10, 11, 12];
$('keys').innerHTML =
  '<div class="black">' + blackKeys.map((k) => `<button style="grid-column:${k + 1}" aria-label="Black key"></button>`).join('') + '</div>' +
  '<div>' + Array.from({ length: 14 }, (_, i) => `<button class="${i ? '' : 'on'}" aria-label="White key"></button>`).join('') + '</div>';

$('ruler').innerHTML = Array.from({ length: 16 }, (_, i) => `<span>${i * 4 + 1}</span>`).join('');

// sine shaped velocity
const vel = (step) => (1 + Math.sin((step - 1) / 64 * Math.PI * 2)) / 2;
const hats = Array.from({ length: 32 }, (_, i) => [i * 2 + 1, 0.2 + 0.8 * vel(i * 2 + 1)]);

// name, notes [step, opacity], last step
const tracksA = [
  ['Stab', [[10, 1], [18, 1], [26, 1]], 31],
  ['Tom 2', [], 64],
  ['Tom 1', [[5, 1], [21, 1]], 32],
  ['Tamb', [[7, 1], [23, 1]], 32],
  ['Ride', [], 64],
  ['Hat 3', hats, 64]
];
const tracksB = [
  ['Hat 2', [], 64],
  ['Hat 1', [[1, 0.6], [2, 0.6], [3, 1], [4, 0.8]], 4],
  ['Clap', [[5, 1]], 8],
  ['Snare 3', [], 64],
  ['Snare 2', [], 64],
  ['Snare 1', [[5, 1]], 8]
];
const row = ([name, notes, end]) => {
  const open = name === 'Hat 3';
  const cls = (open ? 'open ' : '') + (name === 'Tom 2' ? 'selected' : '');
  const rest = end < 64 ? `<i class="rest" style="grid-column:${end + 1}/65"></i><i class="back" style="grid-column:${end + 1}"></i>` : '';
  return `<div class="track ${cls}"><div class="track-name"><i class="${open ? 'down' : 'right'}"></i><span>${name}</span><button>M</button><button>S</button></div>
    <div class="steps">${rest}${notes.map(([s, o]) => `<i class="note" style="grid-column:${s};opacity:${o.toFixed(2)}"></i>`).join('')}</div>
    <div class="gutter">${end === 64 ? '<i class="back"></i>' : ''}</div></div>`;
};
$('rows-a').innerHTML = tracksA.map(row).join('');
$('rows-b').innerHTML = tracksB.map(row).join('');
$('velocity').innerHTML = Array.from({ length: 64 }, (_, i) => `<i style="height:${Math.max(1, Math.round(vel(i + 1) * 55))}px"></i>`).join('');

$('layers').innerHTML = ['80s_DrumBox_07', '80s_DrumBox_06', '80s_DrumBox_05'].map((n, i) =>
  `<div class="layer ${i ? '' : 'on'}">${n}<div><button class="btn">M</button><button class="btn">S</button><i></i></div></div>`).join('') +
  '<div class="layer empty">Empty Layer</div>'.repeat(5);

// decaying tom waveform, as [x, height] extremes joined by cosines
const extremes = [[0, 0], [2, -34], [5, 35], [9, -28], [18, 32], [25, -17], [32, 23], [38, -19], [45, 19], [52, -17], [59, 18], [66, -13], [73, 18],
  [80, -10], [87, 18], [95, -9], [101, 14], [109, -9], [116, 13], [124, -9], [131, 11], [139, -8], [147, 10], [155, -7], [163, 9], [171, -6]];
let x = 179, gap = 16;
for (let a = 8; x < 560; a *= 0.92) {
  extremes.push([x, a], [x + gap / 2, -a * 0.7]);
  x += gap;
  gap += 0.38;
}
extremes.push([575, 0], [724, 0]);
function wavePath(from, to, mid, sx, sy) {
  let d = '';
  for (let i = from; i < to; i++) {
    const [x0, y0] = extremes[i], [x1, y1] = extremes[i + 1];
    for (let t = 0; t <= 1; t += 0.125) {
      const y = y0 + (y1 - y0) * (1 - Math.cos(Math.PI * t)) / 2;
      d += `${d ? 'L' : 'M'}${((x0 + (x1 - x0) * t) * sx).toFixed(1)} ${(mid - y * sy).toFixed(1)}`;
    }
  }
  return d;
}
const last = extremes.length - 1;
const parts = [[0, 8, 3], [8, 14, 2.4], [14, 20, 2], [20, 26, 1.5], [26, last, 1]];
$('wave').innerHTML =
  '<path d="M0 42.5H724" stroke="#8799a8"/><path d="M181.5 0V85M362.5 0V85M543.5 0V85" stroke="#ccdbe8"/>' +
  parts.map(([a, b, w]) => `<path d="${wavePath(a, b, 42.5, 1, 1)}" fill="none" stroke="#6b8090" stroke-width="${w}" stroke-linejoin="round"/>`).join('');
$('overview').innerHTML = `<path d="${wavePath(0, last, 7.5, 1, 0.14)}" fill="none" stroke="#d9dbd2" stroke-width="1.2"/>`;

// knobs; data-dot is the pointer angle
const addKnob = (el) => {
  const dot = el.dataset.dot;
  const a = dot * Math.PI / 180;
  const r = el.classList.contains('large') ? 1.4 : 1.7;
  const pointer = dot === undefined ? '' : `<circle cx="${(8 * Math.sin(a)).toFixed(1)}" cy="${(-8 * Math.cos(a)).toFixed(1)}" r="${r + 0.6}" fill="#111" stroke="#fff" stroke-width=".8"/><circle cx="-5.5" cy="11.8" r="1.2" fill="#1c3a50"/>`;
  el.insertAdjacentHTML('afterbegin', `<svg viewBox="-14 -14 28 28"><use href="#knob" x="-14" y="-14" width="28" height="28"/>${pointer}</svg>`);
};

document.querySelectorAll('.env').forEach((env, n) => {
  const faders = [['A', 1], ['D', 3], ['H', 31], ['S', 99], ['R', 2]];
  env.innerHTML = faders.map(([l, v]) => `<div class="fader"><input type="range" value="${v}" id="f${n}${l}" style="--v:${v}%"><label for="f${n}${l}">${l}</label></div>`).join('') +
    ['A-C', 'D-C', 'R-C'].map((l) => `<div class="k" data-dot="0">${l}</div>`).join('');
});
document.querySelectorAll('.k').forEach(addKnob);

const mods = ['Src', 'A-En', 'F-En', 'Vel', 'Rnd'];
for (let i = 1; i <= 16; i++) mods.push('S ' + i);
for (let i = 1; i <= 4; i++) mods.push('M ' + i);
mods.push('Mod', 'Pch', 'Pres', 'Tprt');
$('mods').innerHTML = mods.map((m, i) => `<button class="${i ? '' : 'on'}">${m}</button>`).join('');
```
